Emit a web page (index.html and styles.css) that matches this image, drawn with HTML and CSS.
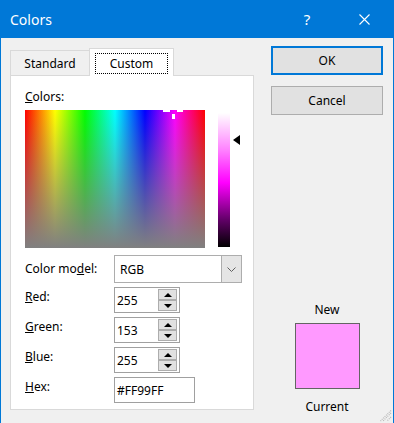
FILE: index.html
```html
<!DOCTYPE html>
<html lang="en">
<head>
  <meta charset="UTF-8">
  <title>Colors</title>
  <link rel="stylesheet" href="styles.css">
</head>
<body>
  <div class="window">
    <div class="titlebar">
      <span class="title">Colors</span>
      <span class="help">?</span>
      <svg class="close" width="11" height="11" viewBox="0 0 11 11"><path d="M0.5 0.5L10.5 10.5M10.5 0.5L0.5 10.5" stroke="#fff" stroke-width="1.1" fill="none"/></svg>
    </div>
    <div class="client">
      <div class="tabs-area">
        <div class="tabstrip">
          <div class="tab">Standard</div>
          <div class="tab active"><span class="focus">Custom</span></div>
        </div>
        <div class="panel">
          <div class="colors-label"><u>C</u>olors:</div>
          <div class="picker-row">
            <div class="spectrum">
              <span class="cross cross-l"></span>
              <span class="cross cross-r"></span>
              <span class="cross cross-v"></span>
            </div>
            <div class="lum"><span class="arrow"></span></div>
          </div>
          <div class="fields">
            <div class="label label-mid">Color mo<u>d</u>el:</div>
            <div class="select">
              <span class="select-value">RGB</span>
              <span class="select-btn">
                <svg width="9" height="5" viewBox="0 0 9 5"><path d="M0.5 0.5L4.5 4.5L8.5 0.5" stroke="#606060" fill="none"/></svg>
              </span>
            </div>

            <div class="label"><u>R</u>ed:</div>
            <div class="spin">
              <span class="spin-value">255</span>
              <span class="spin-btns"><span class="spin-btn"><i class="up"></i></span><span class="spin-btn"><i class="down"></i></span></span>
            </div>

            <div class="label"><u>G</u>reen:</div>
            <div class="spin">
              <span class="spin-value">153</span>
              <span class="spin-btns"><span class="spin-btn"><i class="up"></i></span><span class="spin-btn"><i class="down"></i></span></span>
            </div>

            <div class="label"><u>B</u>lue:</div>
            <div class="spin">
              <span class="spin-value">255</span>
              <span class="spin-btns"><span class="spin-btn"><i class="up"></i></span><span class="spin-btn"><i class="down"></i></span></span>
            </div>

            <div class="label"><u>H</u>ex:</div>
            <div class="hex">#FF99FF</div>
          </div>
        </div>
      </div>
      <div class="side">
        <div class="button default">OK</div>
        <div class="button">Cancel</div>
        <div class="preview">
          <div class="preview-label">New</div>
          <div class="swatch"></div>
          <div class="preview-label current">Current</div>
        </div>
      </div>
    </div>
    <svg class="grip" width="12" height="12" viewBox="0 0 12 12">
      <path d="M11 3L3 11M11 7L7 11M11 0.5L0.5 11" stroke="#b8b8b8" stroke-width="1.2" stroke-dasharray="1 1" fill="none"/>
    </svg>
  </div>
</body>
</html>
```

FILE: styles.css
```css
body { margin: 0; font-family: 'Noto Sans', 'Open Sans', sans-serif; font-size: 12px; color: #000; }
.window { position: relative; width: 394px; height: 423px; box-sizing: border-box; border-left: 1px solid #0078d7; border-right: 1px solid #0078d7; background: #f0f0f0; display: flex; flex-direction: column; }

.titlebar { height: 38px; flex: none; background: #0078d7; color: #fff; display: flex; align-items: center; padding-left: 9px; }
.title { font-size: 14px; }
.help { margin-left: auto; width: 12px; text-align: center; font-size: 15px; }
.close { margin-left: 46px; margin-right: 23px; }

.client { flex: 1; display: flex; padding: 9px 10px 8px 9px; }

.tabs-area { width: 244px; flex: none; }
.tabstrip { height: 27px; margin-top: 1px; display: flex; align-items: flex-end; position: relative; z-index: 1; }
.tab { box-sizing: border-box; height: 25px; width: 80px; padding-top: 1px; border: 1px solid #d9d9d9; border-bottom: none; display: flex; align-items: center; justify-content: center; }
.tab.active { height: 28px; width: 85px; padding-top: 0; margin-left: -1px; margin-bottom: -1px; background: #fff; }
.focus { box-sizing: border-box; width: 73px; height: 21px; border: 1px dotted #000; display: flex; align-items: center; justify-content: center; margin-top: 1px; }

.panel { box-sizing: border-box; height: 335px; background: #fff; border: 1px solid #d9d9d9; padding: 13px 0 0 14px; }
.colors-label { line-height: 16px; margin-bottom: 5px; }

.picker-row { display: flex; align-items: flex-start; }
.spectrum { position: relative; width: 180px; height: 138px; background: linear-gradient(to bottom, rgba(128,128,128,0), #808080), linear-gradient(to right, #f00, #ff0 16.67%, #0f0 33.33%, #0ff 50%, #00f 66.67%, #f0f 83.33%, #f00); }
.cross { position: absolute; background: #fff; }
.cross-l { left: 138px; top: 0; width: 7px; height: 2px; }
.cross-r { left: 152px; top: 0; width: 6px; height: 2px; }
.cross-v { left: 147px; top: 4px; width: 3px; height: 5px; }
.lum { position: relative; margin-left: 13px; margin-top: 3px; width: 12px; height: 134px; background: linear-gradient(to bottom, #fff, #ff80ff 28%, #f0f 52%, #600066 80%, #000); }
.arrow { position: absolute; left: 15px; top: 22px; width: 0; height: 0; border-right: 7px solid #000; border-top: 5px solid transparent; border-bottom: 5px solid transparent; }

.fields { margin-top: 7px; display: grid; grid-template-columns: 89px auto; grid-template-rows: 28px 26px 26px 26px 26px; row-gap: 4px; justify-items: start; }
.label { line-height: 16px; padding-top: 2px; }
.label-mid { align-self: center; padding-top: 0; }

.select { box-sizing: border-box; width: 128px; height: 28px; border: 1px solid #adadad; display: flex; }
.select-value { flex: 1; padding-left: 5px; display: flex; align-items: center; }
.select-btn { width: 19px; background: #e5e5e5; border-left: 1px solid #adadad; display: flex; align-items: center; justify-content: center; }

.spin { box-sizing: border-box; width: 66px; height: 26px; border: 1px solid #a0a0a0; display: flex; }
.spin-value { flex: 1; padding-left: 2px; display: flex; align-items: center; }
.spin-btns { display: flex; flex-direction: column; margin: 1px 2px 1px 0; }
.spin-btn { box-sizing: border-box; width: 19px; height: 11px; background: #e1e1e1; border: 1px solid #adadad; display: flex; align-items: center; justify-content: center; }
.spin-btn i { width: 0; height: 0; border-left: 4px solid transparent; border-right: 4px solid transparent; }
.spin-btn .up { border-bottom: 4px solid #000; }
.spin-btn .down { border-top: 4px solid #000; }

.hex { box-sizing: border-box; width: 81px; height: 26px; border: 1px solid #a0a0a0; padding-left: 2px; display: flex; align-items: center; }

.side { width: 112px; margin-left: 17px; display: flex; flex-direction: column; align-items: stretch; }
.button { box-sizing: border-box; height: 29px; background: #e1e1e1; border: 1px solid #adadad; display: flex; align-items: center; justify-content: center; }
.button.default { border: 2px solid #0078d7; margin-top: -1px; }
.button + .button { margin-top: 11px; }
.preview { margin-top: auto; display: flex; flex-direction: column; align-items: center; }
.preview-label { line-height: 16px; }
.swatch { box-sizing: border-box; width: 65px; height: 66px; margin-top: 5px; background: #ff99ff; border: 1px solid #646464; }
.current { margin-top: 10px; }

.grip { position: absolute; right: 1px; bottom: 1px; }
```
